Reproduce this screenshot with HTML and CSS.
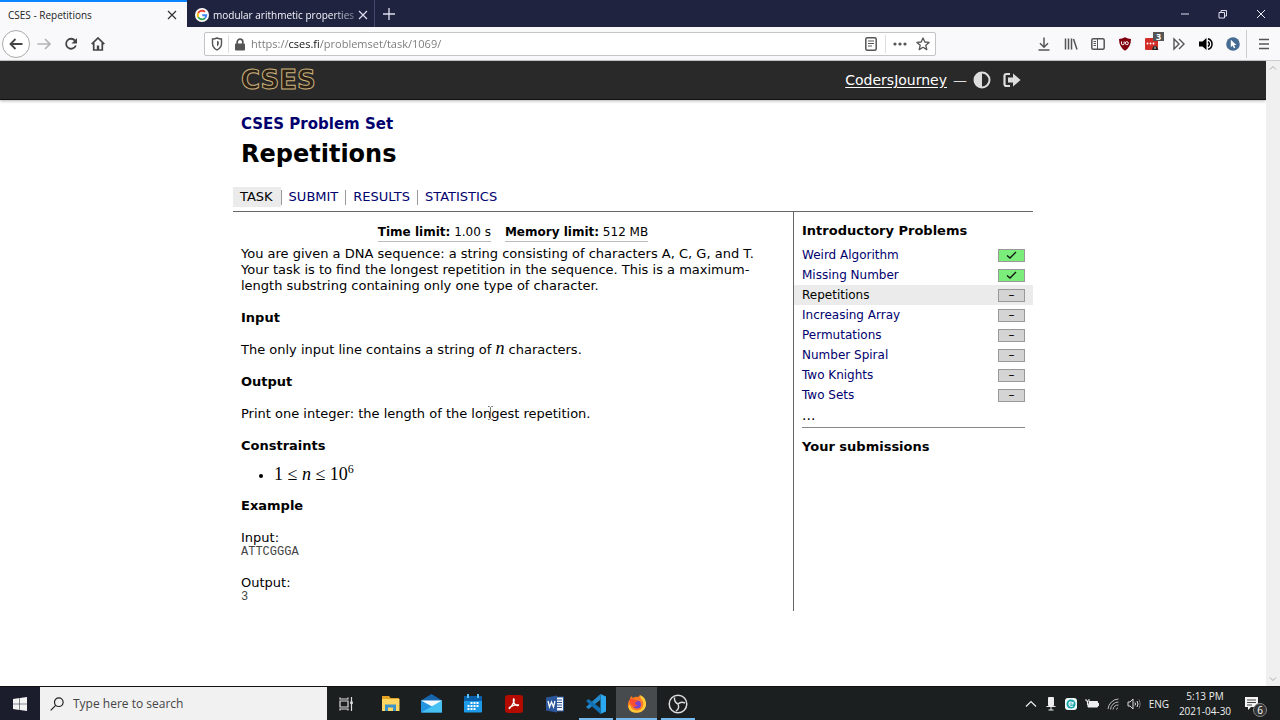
FILE: index.html
```html
<!DOCTYPE html>
<html lang="en">
<head>
<meta charset="utf-8">
<title>CSES - Repetitions</title>
<link rel="stylesheet" href="styles.css">
</head>
<body>
<header class="tabstrip">
  <div class="tab tab-active"><span class="tab-title">CSES - Repetitions</span>
    <button class="plain" aria-label="Close tab"><svg width="10" height="10" viewBox="0 0 10 10"><path d="M1 1l8 8M9 1l-8 8" stroke="#333" stroke-width="1.2"/></svg></button></div>
  <div class="tab"><svg class="favicon" width="14" height="14" viewBox="0 0 14 14"><circle cx="7" cy="7" r="7" fill="#fff"/><g fill="none" stroke-width="1.9"><path d="M10 3.9A4.3 4.3 0 0 0 3.2 5" stroke="#ea4335"/><path d="M3.2 5a4.3 4.3 0 0 0 0 4.1" stroke="#fbbc05"/><path d="M3.2 9.1a4.3 4.3 0 0 0 6.7 1.1" stroke="#34a853"/><path d="M9.9 10.2A4.3 4.3 0 0 0 11.3 7.2H7.2" stroke="#4285f4"/></g></svg>
    <span class="tab-title tab-fade">modular arithmetic properties</span>
    <button class="plain" aria-label="Close tab"><svg width="10" height="10" viewBox="0 0 10 10"><path d="M1 1l8 8M9 1l-8 8" stroke="#dde" stroke-width="1.2"/></svg></button></div>
  <button class="plain new-tab" aria-label="New tab"><svg width="12" height="12" viewBox="0 0 12 12"><path d="M6 0v12M0 6h12" stroke="#dde" stroke-width="1.3"/></svg></button>
  <div class="window-controls">
    <button class="plain" aria-label="Minimize"><svg width="10" height="10" viewBox="0 0 10 10"><path d="M1 5h8" stroke="#dde"/></svg></button>
    <button class="plain" aria-label="Restore"><svg width="10" height="10" viewBox="0 0 10 10" fill="none" stroke="#dde"><path d="M1 3.5h5.5V9H1zM3 3.5v-2h5.500v5.500h-2"/></svg></button>
    <button class="plain" aria-label="Close"><svg width="10" height="10" viewBox="0 0 10 10"><path d="M1 1l8 8M9 1l-8 8" stroke="#eef"/></svg></button>
  </div>
</header>
<nav class="toolbar" aria-label="Browser">
  <div class="nav-buttons">
    <button class="plain back" aria-label="Back"><svg width="14" height="14" viewBox="0 0 14 14" fill="none" stroke="#444" stroke-width="1.8"><path d="M13.500 7H1.500M6.500 2L1.500 7l5 5"/></svg></button>
    <button class="plain" aria-label="Forward"><svg width="14" height="14" viewBox="0 0 14 14" fill="none" stroke="#b4b4b6" stroke-width="1.6"><path d="M.5 7h12M8 2l5 5-5 5"/></svg></button>
    <button class="plain" aria-label="Reload"><svg width="14" height="14" viewBox="0 0 14 14"><path d="M11 3.600A5 5 0 1 0 11.800 8.500" fill="none" stroke="#444" stroke-width="1.800"/><path d="M13 1v5.500H7.500z" fill="#444"/></svg></button>
    <button class="plain" aria-label="Home"><svg width="14" height="14" viewBox="0 0 14 14" fill="none" stroke="#444" stroke-width="1.700"><path d="M.7 7.200L7 1l6.300 6.200M2.700 6v7h8.600V6"/><path d="M7 13V8.500" stroke-width="2.400"/></svg></button>
  </div>
  <div class="urlbar">
    <svg width="12" height="14" viewBox="0 0 12 14" fill="none" stroke="#555" stroke-width="1.400"><path d="M1.500 2Q4 2 6 1q2 1 4.500 1v4.500Q10.500 10.500 6 13 1.500 10.500 1.500 6.500z"/><path d="M6 4v5.500q1.800-1 1.800-3V4.500z" fill="#555" stroke="none"/></svg>
    <span class="url-sep"></span>
    <svg width="12" height="13" viewBox="0 0 12 13"><path d="M3.200 6V4a2.800 2.800 0 0 1 5.600 0v2" fill="none" stroke="#555" stroke-width="1.700"/><rect x="1" y="5.500" width="10" height="7" rx="1" fill="#555"/></svg>
    <input class="url" type="text" aria-label="Address" value="https://cses.fi/problemset/task/1069/">
    <button class="plain" aria-label="Reader view"><svg width="12" height="14" viewBox="0 0 12 14" fill="none" stroke="#555"><rect x=".8" y=".8" width="10.400" height="12.400" rx="1.500" stroke-width="1.500"/><path d="M3 4h6M3 6.500h6M3 9h4"/></svg></button>
    <span class="url-sep"></span>
    <button class="plain" aria-label="Page actions"><svg width="14" height="4" viewBox="0 0 14 4" fill="#555"><circle cx="2" cy="2" r="1.600"/><circle cx="7" cy="2" r="1.600"/><circle cx="12" cy="2" r="1.600"/></svg></button>
    <button class="plain" aria-label="Bookmark"><svg width="14" height="14" viewBox="0 0 14 14"><path d="M7 1l1.800 4 4.300.4-3.300 2.900 1 4.300L7 10.300l-3.800 2.300 1-4.300L.9 5.400 5.200 5z" fill="none" stroke="#555" stroke-width="1.300" stroke-linejoin="round"/></svg></button>
  </div>
  <div class="extensions">
    <button class="plain" aria-label="Downloads"><svg width="14" height="14" viewBox="0 0 14 14" fill="none" stroke="#555" stroke-width="1.500"><path d="M7 .5V10M3 6.200l4 4 4-4M1.500 13h11"/></svg></button>
    <button class="plain" aria-label="Library"><svg width="14" height="14" viewBox="0 0 14 14" stroke="#555" stroke-width="1.500"><path d="M1.500 1.500v11M4.500 1.500v11M7.500 1.500v11M9.500 2l3.500 10.500"/></svg></button>
    <button class="plain" aria-label="Sidebars"><svg width="14" height="12" viewBox="0 0 14 12" fill="none" stroke="#555"><rect x=".8" y=".8" width="12.400" height="10.400" rx="1.500" stroke-width="1.500"/><path d="M6.500 1v10M2.500 3.500H5M2.500 5.500H5M2.500 7.500H5"/></svg></button>
    <button class="plain" aria-label="uBlock Origin"><svg width="14" height="14" viewBox="0 0 14 14"><path d="M7 .3q3 1.700 6 1.700 0 8-6 11.700Q1 10 1 2q3 0 6-1.700z" fill="#800010"/><path d="M3.500 4.500v2.300q0 1 1.300 1t1.300-1V4.500" fill="none" stroke="#fff"/><circle cx="8.800" cy="6.200" r="1.500" fill="none" stroke="#fff"/></svg></button>
    <button class="plain badge-host" aria-label="Password manager"><svg width="14" height="14" viewBox="0 0 14 14"><rect y="1" width="13" height="12" rx="1" fill="#d32d27"/><g fill="#fff"><circle cx="2.500" cy="6.500" r="1"/><circle cx="5.500" cy="6.500" r="1"/><circle cx="8.500" cy="6.500" r="1"/></g><path d="M7 13l1-3a2.200 2.200 0 0 1 4 0l1.500 3z" fill="#222"/><path d="M10 9.500v2.500" stroke="#ddd"/></svg><span class="badge">3</span></button>
    <button class="plain" aria-label="More tools"><svg width="14" height="14" viewBox="0 0 14 14" fill="none" stroke="#555" stroke-width="1.400"><path d="M2 2v10l5-5zM7 2l5 5-5 5"/></svg></button>
    <button class="plain" aria-label="Sound"><svg width="14" height="14" viewBox="0 0 14 14"><path d="M0 4.500h3.500L7.500 1v12L3.500 9.500H0z" fill="#000"/><path d="M9 4.500a3 3 0 0 1 0 5M9 1.700a5.500 5.500 0 0 1 0 10.600" fill="none" stroke="#000" stroke-width="1.500"/></svg></button>
    <button class="plain" aria-label="Cursor tool"><svg width="14" height="14" viewBox="0 0 14 14"><circle cx="7" cy="7" r="6.800" fill="#456b93"/><path d="M4.800 2.800v7.500l1.800-1.700 1.300 2.700 1.400-.7L8 8h2.400z" fill="#fff"/></svg></button>
    <button class="plain menu" aria-label="Menu"><svg width="12" height="12" viewBox="0 0 12 12"><path d="M1 1.500h10M1 6h10M1 10.500h10" stroke="#555" stroke-width="1.500"/></svg></button>
  </div>
</nav>
<div class="viewport">
  <div class="page">
    <div class="site-header"><div class="wrap site-bar">
      <a class="logo" href="#">CSES</a>
      <div class="account"><a href="#">CodersJourney</a><span>—</span>
        <button class="plain" aria-label="Toggle theme"><svg width="18" height="18" viewBox="0 0 18 18"><circle cx="9" cy="9" r="7.500" fill="none" stroke="#ddd" stroke-width="2"/><path d="M9 1.500a7.500 7.500 0 0 0 0 15z" fill="#ddd"/></svg></button>
        <button class="plain" aria-label="Log out"><svg width="18" height="16" viewBox="0 0 18 16"><path d="M7 2H3.500Q1.500 2 1.500 4v8q0 2 2 2H7" fill="none" stroke="#ddd" stroke-width="2.200"/><path d="M5 5.500h5V1.500L17.500 8 10 14.500v-4H5z" fill="#ddd"/></svg></button>
      </div>
    </div></div>
    <div class="wrap">
      <div class="titles"><h3><a href="#">CSES Problem Set</a></h3><h1>Repetitions</h1></div>
      <ul class="task-nav"><li class="current"><a href="#">TASK</a></li><li><a href="#">SUBMIT</a></li><li><a href="#">RESULTS</a></li><li><a href="#">STATISTICS</a></li></ul>
      <div class="columns">
        <main class="content">
          <ul class="limits"><li><b>Time limit:</b> 1.00 s</li><li><b>Memory limit:</b> 512 MB</li></ul>
          <p class="lead">You are given a DNA sequence: a string consisting of characters A, C, G, and T. Your task is to find the longest repetition in the sequence. This is a maximum-length substring containing only one type of character.</p>
          <h2>Input</h2>
          <p>The only input line contains a string of <i class="math">n</i> characters.</p>
          <h2>Output</h2>
          <p class="pointer-host">Print one integer: the length of the longest repetition.<svg class="ibeam" width="7" height="14" viewBox="0 0 7 14"><path d="M1 .5h1.500l1 1 1-1H6M3.500 1.500v11M1 13.500h1.500l1-1 1 1H6" fill="none" stroke="#777"/></svg></p>
          <h2>Constraints</h2>
          <ul class="constraints"><li><span class="math">1 ≤ <i>n</i> ≤ 10<sup>6</sup></span></li></ul>
          <h2>Example</h2>
          <p class="sample-label">Input:</p><pre>ATTCGGGA</pre>
          <p class="sample-label">Output:</p><pre>3</pre>
        </main>
        <aside class="sidebar">
          <h4>Introductory Problems</h4>
          <ul class="problems">
            <li><a href="#">Weird Algorithm</a><span class="score full"><svg width="11" height="8" viewBox="0 0 11 8"><path d="M1 4.500L4 7l6-6" fill="none" stroke="#111" stroke-width="1.300"/></svg></span></li>
            <li><a href="#">Missing Number</a><span class="score full"><svg width="11" height="8" viewBox="0 0 11 8"><path d="M1 4.500L4 7l6-6" fill="none" stroke="#111" stroke-width="1.300"/></svg></span></li>
            <li class="current"><a href="#">Repetitions</a><span class="score">–</span></li>
            <li><a href="#">Increasing Array</a><span class="score">–</span></li>
            <li><a href="#">Permutations</a><span class="score">–</span></li>
            <li><a href="#">Number Spiral</a><span class="score">–</span></li>
            <li><a href="#">Two Knights</a><span class="score">–</span></li>
            <li><a href="#">Two Sets</a><span class="score">–</span></li>
            <li class="more">...</li>
          </ul>
          <hr>
          <h4>Your submissions</h4>
        </aside>
      </div>
    </div>
  </div>
  <div class="scrollbar"><svg width="8" height="5" viewBox="0 0 8 5"><path d="M1 4.500l3-3 3 3" fill="none" stroke="#aaa"/></svg><svg width="8" height="5" viewBox="0 0 8 5"><path d="M1 .5l3 3 3-3" fill="none" stroke="#aaa"/></svg></div>
</div>
<footer class="taskbar">
  <button class="plain start" aria-label="Start"><svg width="14" height="14" viewBox="0 0 14 14" fill="#f4f4f4"><path d="M0 2l6.500-1v5.700H0zM7 .9L14 0v6.700H7zM0 7.200h6.500V13L0 12zM7 7.200h7V14l-7-.9z"/></svg></button>
  <label class="search"><svg width="14" height="14" viewBox="0 0 14 14" fill="none" stroke="#222" stroke-width="1.200"><circle cx="8.800" cy="5.200" r="4.300"/><path d="M5.700 8.300L.7 13.300"/></svg><input type="text" placeholder="Type here to search" aria-label="Search"></label>
  <div class="apps">
    <button class="plain task-view" aria-label="Task view"><svg width="15" height="14" viewBox="0 0 15 14" fill="none" stroke="#ddd" stroke-width="1.200"><path d="M1 .5V2h8V.5M1 13.500V12h8v1.500M1 4h8v6H1zM12.500 0v14"/><path d="M11.200 4.500h2.600v2.500h-2.600z" fill="#ddd" stroke="none"/></svg></button>
    <button class="plain" aria-label="File Explorer"><svg width="19" height="17" viewBox="0 0 19 17"><path d="M1 1h7l1.500 2H18v13H1z" fill="#e5a323"/><path d="M1 4h17.500v12H1z" fill="#ffd661"/><path d="M4 16V9.500h11V16h-3v-3.500H7V16z" fill="#3c93c8"/></svg></button>
    <button class="plain" aria-label="Mail"><svg width="21" height="19" viewBox="0 0 21 19"><path d="M0 6.500L10.500 0 21 6.500V18H0z" fill="#1765ad"/><path d="M0 6.500h21v12H0z" fill="#2394df"/><path d="M0 6.500h21L12 13z" fill="#f4f8ff"/><path d="M0 18.500L21 6.500v12z" fill="#46c1f2"/></svg></button>
    <button class="plain" aria-label="Calendar"><svg width="18" height="19" viewBox="0 0 18 19"><rect y="2" width="18" height="16.500" rx="1" fill="#1e9be8"/><path d="M0 2h18v5H0z" fill="#0b5fa8"/><path d="M4 0v4M14 0v4" stroke="#5cc1f5" stroke-width="2"/><path d="M6.500 9h9M3.500 12h12M3.500 15h8" stroke="#fff" stroke-width="2" stroke-dasharray="2 1"/></svg></button>
    <button class="plain" aria-label="Acrobat"><svg width="18" height="18" viewBox="0 0 18 18"><rect width="18" height="18" rx="3" fill="#b30b00"/><path d="M8.500 4c1.500 0 .8 4-4 9.500-2-.5 4-4 9-3.500 0 2-6-.5-5-6z" fill="none" stroke="#fff" stroke-width="1.300"/></svg></button>
    <button class="plain" aria-label="Word"><svg width="18" height="18" viewBox="0 0 18 18"><path d="M9 2h8.500v14H9z" fill="#f5f7fc" stroke="#2b579a"/><path d="M11 5h5M11 7.500h5M11 10h5M11 12.500h5" stroke="#2b579a"/><path d="M0 2.500L11 .5v17l-11-2z" fill="#2b579a"/><path d="M2 6l1.500 6L5.500 7l2 5L9 6" fill="none" stroke="#fff" stroke-width="1.300"/></svg></button>
    <button class="plain running" aria-label="Visual Studio Code"><svg width="20" height="20" viewBox="0 0 20 20"><path d="M14.500 0L20 2.500v15L14.500 20z" fill="#2aa7ee"/><path d="M14.500 0v5.700L2.500 15 0 13z" fill="#2489ca"/><path d="M14.500 20v-5.700L2.500 5 0 7z" fill="#1070b3"/></svg></button>
    <button class="plain running focused" aria-label="Firefox"><svg width="20" height="20" viewBox="0 0 20 20"><path d="M3 5l1-3 2 2q2-2 5-1l2-2q1 3 3 4l1-1q3 5 1 9-3 6-9 5.500Q2 18 .8 12 .5 8 3 5z" fill="#ff7a20"/><path d="M13 1q0 3 2 5 2 2 1 6-2 5-7 4.500-5-1-6-6-2 1-1.500 3Q3 19 10 18.800q7-.5 9-7Q20 4 13 1z" fill="#ffca3a"/><circle cx="10" cy="10.500" r="4" fill="#7443d0"/><path d="M3 5q3-1 5 1l3 1-3 2q0 2 3 2-3 3-6 .5Q2 9 3 5z" fill="#ff4d32"/></svg></button>
    <button class="plain running" aria-label="OBS Studio"><svg width="20" height="20" viewBox="0 0 20 20" fill="none" stroke="#ddd"><circle cx="10" cy="10" r="8.800" stroke-width="1.500"/><path d="M6.500 3.500q-.5 4.500 3.500 6.500M17 9q-4-2-7 1M8 17q4-2.500 2-7" stroke-width="1.400"/></svg></button>
  </div>
  <div class="tray">
    <svg width="12" height="14" viewBox="0 0 12 14"><path d="M1 9.500l5-5 5 5" fill="none" stroke="#eee" stroke-width="1.200"/></svg>
    <svg width="12" height="14" viewBox="0 0 12 14"><rect x="3" y="0" width="6" height="9" rx="1" fill="#eee"/><path d="M1.500 9.500h9M6 9v4M3.500 13h5" stroke="#eee"/></svg>
    <svg width="12" height="14" viewBox="0 0 12 14"><rect y="1" width="12" height="12" rx="3" fill="#eefafa"/><circle cx="6" cy="7" r="4.500" fill="#16a5ab"/><path d="M8 9Q4 10 4 7t4-1.500V7H5" fill="none" stroke="#fff" stroke-width="1.200"/></svg>
    <svg width="14" height="14" viewBox="0 0 14 14"><path d="M4 4.500h8.500v5.500H3V8" fill="#eee" stroke="#eee"/><path d="M13.500 6v3M1 2v2h3V2M2.500 4v4" stroke="#eee" fill="none"/></svg>
    <svg width="12" height="14" viewBox="0 0 12 14" fill="none" stroke="#bbb"><path d="M1 12A11 11 0 0 1 11.500 2M3.500 12.500a8 8 0 0 1 8-7.500M6 12.500A5.500 5.500 0 0 1 11.500 8M9 12.500l2-1.800"/></svg>
    <svg width="14" height="14" viewBox="0 0 14 14" fill="none" stroke="#ddd"><path d="M1 5h2l3-3v10L3 9H1zM8 5.500q1 1.500 0 3M10 4q2 3 0 6"/><path d="M12 2.500q2.500 4.500 0 9" stroke="#777"/></svg>
    <span class="lang">ENG</span>
    <time class="clock">5:13 PM<br>2021-04-30</time>
    <button class="plain notices" aria-label="Notifications"><svg width="16" height="16" viewBox="0 0 16 16"><path d="M1 1h13v10H7l-3 3v-3H1z" fill="#f4f4f4"/><path d="M3 4h9M3 6.500h9M3 9h5" stroke="#444"/></svg><span class="count">6</span></button>
  </div>
</footer>
</body>
</html>
```
FILE: styles.css
```css
* { box-sizing: border-box; }
body { margin: 0; min-height: 100vh; display: flex; flex-direction: column; background: #fff; color: #000; font-family: Verdana, "DejaVu Sans", sans-serif; font-size: 13px; line-height: 16px; }
svg { display: block; flex: none; }
ul { list-style: none; margin: 0; padding: 0; }
h1, h2, h3, h4, p, pre { margin: 0; }
a { color: #00006e; text-decoration: none; }
.plain { display: flex; align-items: center; justify-content: center; padding: 0; border: 0; background: none; color: inherit; font: inherit; }

.tabstrip { display: flex; height: 27px; background: #202340; color: #f4f4fa; font-family: "Segoe UI", "Open Sans", sans-serif; font-size: 10px; }
.tab { display: flex; align-items: center; gap: 4px; width: 188px; padding: 2px 10px 0 8px; border-right: 1px solid #45486a; }
.tab-active { width: 187px; border-top: 2px solid #0a84ff; border-right: 0; padding-top: 0; background: #f9f9fb; color: #222; }
.tab-title { flex: 1; white-space: nowrap; }
.tab-fade { mask-image: linear-gradient(to right, #000 85%, transparent 110%); }
.new-tab { width: 27px; }
.window-controls { display: flex; margin-left: auto; }
.window-controls .plain { width: 38px; }

.toolbar { display: flex; align-items: center; height: 34px; padding-top: 1px; background: #f9f9fb; border-bottom: 1px solid #ccc; }
.nav-buttons { display: flex; align-items: center; width: 204px; padding-left: 2px; }
.nav-buttons .plain { width: 27px; height: 28px; }
.nav-buttons .back { width: 28px; border: 1px solid #aaa; border-radius: 50%; background: #fff; }
.urlbar { flex: 1; display: flex; align-items: center; gap: 5px; height: 24px; padding: 0 3px 0 6px; border: 1px solid #c4c4c8; border-radius: 2px; background: #fff; }
.url-sep { width: 1px; height: 18px; background: #ddd; }
.urlbar .plain { width: 18px; height: 20px; }
.url { flex: 1; min-width: 0; padding: 0; border: 0; outline: 0; font: 11px/20px "Segoe UI", "Open Sans", sans-serif; color: transparent; background: linear-gradient(to right, #777 0 37px, #111 37px 71px, #777 71px); background-clip: text; -webkit-background-clip: text; background: linear-gradient(to right, #777 0 38px, #111 38px 68px, #777 68px) text; }
.extensions { display: flex; align-items: center; padding-left: 94px; }
.extensions .plain { width: 27px; height: 28px; }
.extensions .menu { width: 34px; border-left: 1px solid #ccc; }
.badge-host { position: relative; }
.badge { position: absolute; top: 2px; right: 1px; width: 11px; height: 9px; background: #555; color: #fff; font: bold 9px/9px "Open Sans", sans-serif; }

.viewport { flex: 1; display: flex; }
.page { flex: 1; }
.scrollbar { width: 14px; display: flex; flex-direction: column; align-items: center; justify-content: space-between; padding: 4px 0; background: #f0f0f0; }
.wrap { max-width: 800px; margin: 0 auto; }
.site-header { background: #292929; border-bottom: 1px solid #111; box-shadow: 0 1px 3px rgba(0, 0, 0, .3); }
.site-bar { height: 38px; padding: 0 12px 0 8px; display: flex; align-items: center; justify-content: space-between; }
.logo { font-size: 26px; font-weight: bold; line-height: 30px; color: #292016; -webkit-text-stroke: 1px #cdb27c; }
.account { display: flex; align-items: center; gap: 6px; color: #ddd; font-size: 14px; }
.account a { color: #fff; text-decoration: underline; text-underline-offset: 2px; }
.account .plain + .plain { margin-left: 6px; }

.titles { padding: 13px 8px 0; }
h3 { font-size: 15px; line-height: 22px; }
h1 { font-size: 24px; line-height: 38px; }
.task-nav { display: flex; padding: 14px 0 4px; border-bottom: 1px solid #666; font-size: 13px; line-height: 20px; }
.task-nav li { display: flex; align-items: center; padding: 0 8px 0 7px; }
.task-nav li + li { padding: 0 7px 0 0; }
.task-nav li + li::before { content: ""; width: 1px; height: 15px; margin-right: 7px; background: #999; }
.current a { color: #000; }
.task-nav .current { background: #ebebeb; }
.columns { display: flex; }
.content { flex: 1; min-width: 0; padding: 12px 8px 8px; }
.limits { display: flex; justify-content: center; gap: 14px; margin-bottom: 4px; font-size: 12px; }
.limits li { border-bottom: 1px solid #bbb; line-height: 17px; }
.content h2 { margin: 16px 0; font-size: 13px; line-height: 16px; }
.math { font-family: "Liberation Serif", serif; font-size: 18px; line-height: 0; }
.pointer-host { position: relative; }
.ibeam { position: absolute; left: 246px; top: 0; }
.constraints { list-style: disc; padding-left: 33px; line-height: 28px; margin: -8px 0; }
.constraints sup { font-size: 12px; line-height: 0; }
pre { margin-bottom: 17px; color: #444; font: 12px/12px "Liberation Mono", monospace; }
pre:last-child { margin-bottom: 0; }
.sidebar { width: 240px; border-left: 1px solid #666; padding: 8px 0; }
h4 { padding: 0 8px; font-size: 13px; line-height: 22px; }
.problems { padding-top: 3px; font-size: 12px; line-height: 20px; }
.problems li { display: flex; align-items: center; justify-content: space-between; height: 20px; padding: 0 8px; }
.problems .current { background: #ebebeb; }
.problems .more { font-size: 14px; }
.score { display: flex; align-items: center; justify-content: center; width: 27px; height: 13px; border: 1px solid #999; background: #d4d4d4; line-height: 11px; }
.full { background: #7bed7b; }
hr { margin: 2px 8px 8px; border: 0; border-top: 1px solid #888; }

.taskbar { display: flex; height: 34px; background: #1b1f20; color: #eee; border-top: 1px solid #111; font-family: "Segoe UI", "Open Sans", sans-serif; font-size: 10px; }
.start { width: 40px; background: #1b1c2c; }
.search { display: flex; align-items: center; gap: 9px; width: 287px; padding-left: 10px; background: #f1f1f1; }
.search input { flex: 1; min-width: 0; padding: 0; border: 0; outline: 0; background: none; font: 12px/20px "Segoe UI", "Open Sans", sans-serif; }
.search input::placeholder { color: #444; opacity: 1; }
.apps { display: flex; }
.apps .plain { width: 41px; }
.apps .task-view { width: 43px; padding-right: 4px; }
.running { background: linear-gradient(#76b9ed, #76b9ed) bottom / 34px 2px no-repeat; }
.running.focused { background: linear-gradient(#76b9ed, #76b9ed) bottom / 100% 2px no-repeat #474b4d; }
.tray { display: flex; align-items: center; gap: 8px; margin-left: auto; padding-right: 10px; }
.clock { width: 56px; text-align: center; line-height: 15px; }
.notices { position: relative; justify-content: flex-start; width: 26px; height: 30px; margin-left: 3px; }
.count { position: absolute; right: 3px; bottom: 2px; width: 14px; height: 14px; border: 1px solid #888; border-radius: 50%; background: #333; color: #fff; line-height: 12px; }
```
